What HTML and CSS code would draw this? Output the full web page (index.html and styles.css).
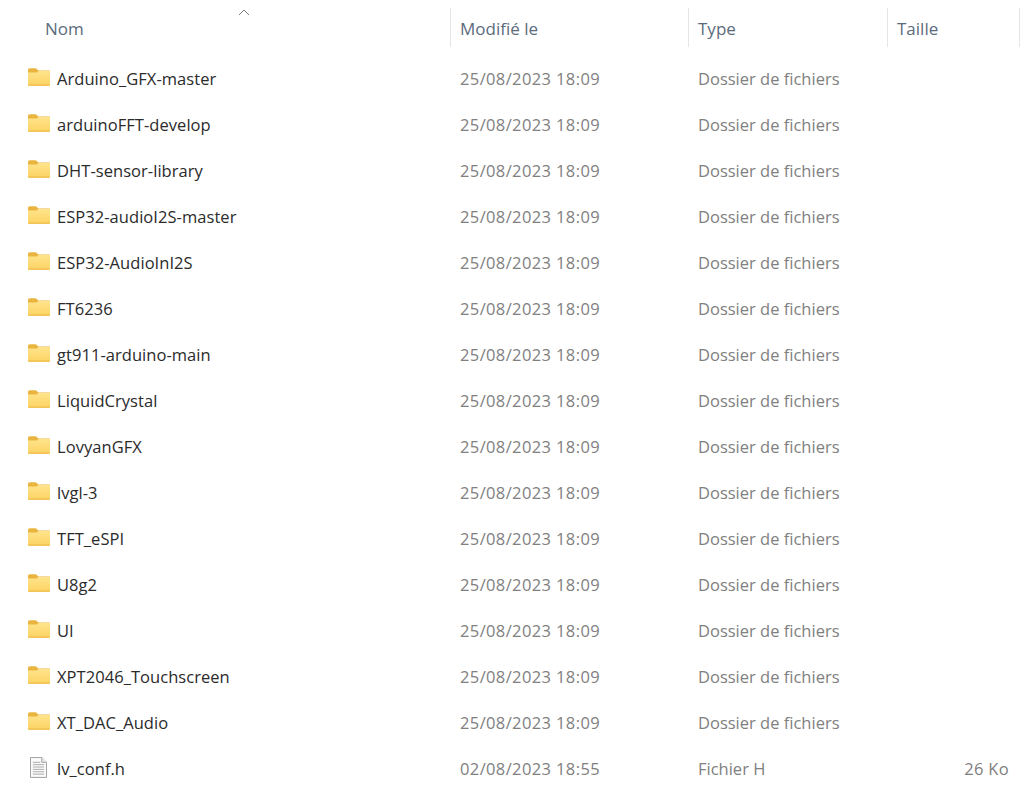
FILE: index.html
```html
<!DOCTYPE html>
<html lang="fr">
<head>
    <meta charset="UTF-8">
    <title>Explorateur de fichiers</title>
    <link rel="stylesheet" href="styles.css">
</head>
<body>
    <svg class="defs" width="0" height="0">
        <defs>
            <linearGradient id="folderFill" x1="0" y1="0" x2="0" y2="1">
                <stop offset="0" stop-color="#ffe48c"/>
                <stop offset="1" stop-color="#fdd364"/>
            </linearGradient>
            <symbol id="folder" viewBox="0 0 22 18">
                <path d="M0 2.2C0 1 .8.3 1.9.3h5.3c.7 0 1.1.2 1.6.7l1.5 1.5H22V5H0z" fill="#e9b53f"/>
                <path d="M0 4.4h8.6l2-1.4H22v13.4c0 .8-.6 1.3-1.3 1.3H1.3C.6 17.7 0 17.2 0 16.4z" fill="url(#folderFill)"/>
                <path d="M0 16.6h22v.1c0 .6-.6 1-1.3 1H1.3c-.7 0-1.3-.4-1.3-1z" fill="#eebc4c"/>
            </symbol>
            <symbol id="file" viewBox="0 0 18 22">
                <path d="M.5.5h12l5 5v16H.5z" fill="#fbfbfb" stroke="#9c9c9c"/>
                <path d="M12.5.5v5h5" fill="#eee" stroke="#9c9c9c"/>
                <path d="M3 5.5h8M3 8h12M3 10.500h12M3 13h12M3 15.500h12M3 18h12" stroke="#a8a8a8"/>
            </symbol>
        </defs>
    </svg>

    <div class="list">
        <div class="row head">
            <div class="col name">Nom<svg class="sort" width="12" height="7" viewBox="0 0 12 7"><path d="M1 6l5-5 5 5" fill="none" stroke="#7d7d7d"/></svg></div>
            <div class="col date">Modifié le</div>
            <div class="col type">Type</div>
            <div class="col size">Taille</div>
        </div>

        <div class="row"><div class="col name"><svg class="icon"><use href="#folder"/></svg>Arduino_GFX-master</div><div class="col date">25/08/2023 18:09</div><div class="col type">Dossier de fichiers</div><div class="col size"></div></div>
        <div class="row"><div class="col name"><svg class="icon"><use href="#folder"/></svg>arduinoFFT-develop</div><div class="col date">25/08/2023 18:09</div><div class="col type">Dossier de fichiers</div><div class="col size"></div></div>
        <div class="row"><div class="col name"><svg class="icon"><use href="#folder"/></svg>DHT-sensor-library</div><div class="col date">25/08/2023 18:09</div><div class="col type">Dossier de fichiers</div><div class="col size"></div></div>
        <div class="row"><div class="col name"><svg class="icon"><use href="#folder"/></svg>ESP32-audioI2S-master</div><div class="col date">25/08/2023 18:09</div><div class="col type">Dossier de fichiers</div><div class="col size"></div></div>
        <div class="row"><div class="col name"><svg class="icon"><use href="#folder"/></svg>ESP32-AudioInI2S</div><div class="col date">25/08/2023 18:09</div><div class="col type">Dossier de fichiers</div><div class="col size"></div></div>
        <div class="row"><div class="col name"><svg class="icon"><use href="#folder"/></svg>FT6236</div><div class="col date">25/08/2023 18:09</div><div class="col type">Dossier de fichiers</div><div class="col size"></div></div>
        <div class="row"><div class="col name"><svg class="icon"><use href="#folder"/></svg>gt911-arduino-main</div><div class="col date">25/08/2023 18:09</div><div class="col type">Dossier de fichiers</div><div class="col size"></div></div>
        <div class="row"><div class="col name"><svg class="icon"><use href="#folder"/></svg>LiquidCrystal</div><div class="col date">25/08/2023 18:09</div><div class="col type">Dossier de fichiers</div><div class="col size"></div></div>
        <div class="row"><div class="col name"><svg class="icon"><use href="#folder"/></svg>LovyanGFX</div><div class="col date">25/08/2023 18:09</div><div class="col type">Dossier de fichiers</div><div class="col size"></div></div>
        <div class="row"><div class="col name"><svg class="icon"><use href="#folder"/></svg>lvgl-3</div><div class="col date">25/08/2023 18:09</div><div class="col type">Dossier de fichiers</div><div class="col size"></div></div>
        <div class="row"><div class="col name"><svg class="icon"><use href="#folder"/></svg>TFT_eSPI</div><div class="col date">25/08/2023 18:09</div><div class="col type">Dossier de fichiers</div><div class="col size"></div></div>
        <div class="row"><div class="col name"><svg class="icon"><use href="#folder"/></svg>U8g2</div><div class="col date">25/08/2023 18:09</div><div class="col type">Dossier de fichiers</div><div class="col size"></div></div>
        <div class="row"><div class="col name"><svg class="icon"><use href="#folder"/></svg>UI</div><div class="col date">25/08/2023 18:09</div><div class="col type">Dossier de fichiers</div><div class="col size"></div></div>
        <div class="row"><div class="col name"><svg class="icon"><use href="#folder"/></svg>XPT2046_Touchscreen</div><div class="col date">25/08/2023 18:09</div><div class="col type">Dossier de fichiers</div><div class="col size"></div></div>
        <div class="row"><div class="col name"><svg class="icon"><use href="#folder"/></svg>XT_DAC_Audio</div><div class="col date">25/08/2023 18:09</div><div class="col type">Dossier de fichiers</div><div class="col size"></div></div>
        <div class="row"><div class="col name"><svg class="icon file-icon"><use href="#file"/></svg>lv_conf.h</div><div class="col date">02/08/2023 18:55</div><div class="col type">Fichier H</div><div class="col size">26 Ko</div></div>
    </div>
</body>
</html>
```

FILE: styles.css
```css
body {
    margin: 0;
    background: #fff;
    font-family: "Open Sans", "Noto Sans", "Liberation Sans", sans-serif;
    font-size: 16.5px;
    color: #808080;
}
.defs {
    position: absolute;
}
.list {
    width: 1020px;
    padding-top: 8px;
}
.row {
    display: flex;
    height: 46px;
    align-items: center;
    white-space: nowrap;
}
.col {
    box-sizing: border-box;
    padding-left: 9px;
}
.name {
    width: 450px;
    padding-left: 28px;
    display: flex;
    align-items: center;
    color: #2b2b2b;
    letter-spacing: 0.05px;
}
.date {
    width: 238px;
    padding-left: 10px;
    letter-spacing: 0.38px;
}
.type {
    width: 199px;
    padding-left: 10px;
}
.size {
    width: 133px;
    padding-right: 11px;
    text-align: right;
    letter-spacing: 0.3px;
}
.icon {
    width: 22px;
    height: 18px;
    margin-right: 7px;
    margin-top: -3px;
}
.file-icon {
    width: 17px;
    height: 21px;
    margin-left: 2px;
    margin-right: 10px;
    margin-top: -2px;
}
.head {
    position: relative;
    height: 39px;
    margin-bottom: 8px;
    align-items: stretch;
    font-size: 17px;
}
.head .col {
    display: flex;
    align-items: center;
    padding-top: 1px;
    color: #5b6b7c;
    letter-spacing: 0;
}
.head .name {
    padding-left: 45px;
}
.head .date,
.head .type,
.head .size {
    border-left: 1px solid #e4e5e7;
    padding-left: 9px;
}
.head .size {
    border-right: 1px solid #e4e5e7;
}
.sort {
    position: absolute;
    left: 238px;
    top: 1px;
}
```
